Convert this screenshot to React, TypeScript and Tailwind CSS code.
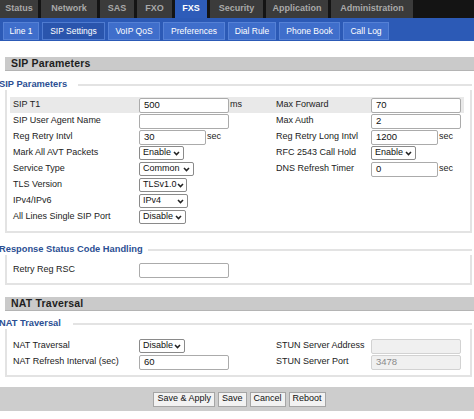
import React from "react";

// FXS > SIP Settings page of a VoIP gateway web admin.

type Cell =
  | { kind: "input"; value?: string; w: string; unit?: string; disabled?: boolean }
  | { kind: "select"; value: string; w: string };

type Row = { label: string; cell: Cell; rlabel?: string; rcell?: Cell; hl?: boolean };

const topTabs = [
  { label: "Status", w: "w-[38px]" },
  { label: "Network", w: "w-[56px]" },
  { label: "SAS", w: "w-[34px]" },
  { label: "FXO", w: "w-[35px]" },
  { label: "FXS", w: "w-[32px]", active: true },
  { label: "Security", w: "w-[53px]" },
  { label: "Application", w: "w-[62px]" },
  { label: "Administration", w: "w-[82px]" },
];

const subTabs = [
  { label: "Line 1", w: "w-[36px]" },
  { label: "SIP Settings", w: "w-[63px]", active: true },
  { label: "VoIP QoS", w: "w-[52px]" },
  { label: "Preferences", w: "w-[62px]" },
  { label: "Dial Rule", w: "w-[48px]" },
  { label: "Phone Book", w: "w-[61px]" },
  { label: "Call Log", w: "w-[46px]" },
];

const sipRows: Row[] = [
  {
    label: "SIP T1",
    cell: { kind: "input", value: "500", w: "w-[90px]", unit: "ms" },
    rlabel: "Max Forward",
    rcell: { kind: "input", value: "70", w: "w-[90px]" },
    hl: true,
  },
  {
    label: "SIP User Agent Name",
    cell: { kind: "input", value: "", w: "w-[90px]" },
    rlabel: "Max Auth",
    rcell: { kind: "input", value: "2", w: "w-[90px]" },
  },
  {
    label: "Reg Retry Intvl",
    cell: { kind: "input", value: "30", w: "w-[67px]", unit: "sec" },
    rlabel: "Reg Retry Long Intvl",
    rcell: { kind: "input", value: "1200", w: "w-[67px]", unit: "sec" },
  },
  {
    label: "Mark All AVT Packets",
    cell: { kind: "select", value: "Enable", w: "w-[45px]" },
    rlabel: "RFC 2543 Call Hold",
    rcell: { kind: "select", value: "Enable", w: "w-[45px]" },
  },
  {
    label: "Service Type",
    cell: { kind: "select", value: "Common", w: "w-[55px]" },
    rlabel: "DNS Refresh Timer",
    rcell: { kind: "input", value: "0", w: "w-[67px]", unit: "sec" },
  },
  { label: "TLS Version", cell: { kind: "select", value: "TLSv1.0", w: "w-[48px]" } },
  { label: "IPv4/IPv6", cell: { kind: "select", value: "IPv4", w: "w-[49px]" } },
  { label: "All Lines Single SIP Port", cell: { kind: "select", value: "Disable", w: "w-[47px]" } },
];

const rscRows: Row[] = [{ label: "Retry Reg RSC", cell: { kind: "input", value: "", w: "w-[90px]" } }];

const natRows: Row[] = [
  {
    label: "NAT Traversal",
    cell: { kind: "select", value: "Disable", w: "w-[46px]" },
    rlabel: "STUN Server Address",
    rcell: { kind: "input", value: "", w: "w-[90px]", disabled: true },
  },
  {
    label: "NAT Refresh Interval (sec)",
    cell: { kind: "input", value: "60", w: "w-[90px]" },
    rlabel: "STUN Server Port",
    rcell: { kind: "input", value: "3478", w: "w-[90px]", disabled: true },
  },
];

function Chevron() {
  return (
    <svg width="7" height="5" viewBox="0 0 7 5" className="shrink-0">
      <polyline points="1,1 3.5,3.6 6,1" fill="none" stroke="#222" strokeWidth="1.5" />
    </svg>
  );
}

function Control({ cell }: { cell: Cell }) {
  if (cell.kind === "select") {
    return (
      <div
        className={`${cell.w} flex h-[14px] items-center justify-between rounded-[2px] border border-[#8a8a8a] bg-white pl-[3px] pr-[3px] text-[9px] text-[#111]`}
      >
        <span>{cell.value}</span>
        <Chevron />
      </div>
    );
  }
  return (
    <div className="flex items-center">
      <div
        className={`${cell.w} flex h-[15px] items-center rounded-[2px] border pl-[4px] text-[9.5px] ${
          cell.disabled ? "border-[#d2d2d2] bg-[#f0f0f0] text-[#8a8a8a]" : "border-[#ababab] bg-white text-[#111]"
        }`}
      >
        {cell.value}
      </div>
      {cell.unit && <span className="ml-[1px] text-[9px] text-[#222]">{cell.unit}</span>}
    </div>
  );
}

function Rows({ rows }: { rows: Row[] }) {
  return (
    <div className="flex flex-col">
      {rows.map((r) => (
        <div
          key={r.label}
          className={`ml-[3px] mr-[6px] grid h-[16px] grid-cols-[129px_137px_95px_1fr] items-center ${
            r.hl ? "bg-[#e9e9e9]" : ""
          }`}
        >
          <span className="pl-[3px] text-[9px] text-[#222]">{r.label}</span>
          <Control cell={r.cell} />
          <span className="text-[9px] text-[#222]">{r.rlabel ?? ""}</span>
          {r.rcell ? <Control cell={r.rcell} /> : <span />}
        </div>
      ))}
    </div>
  );
}

function Group({ legend, lineGap, rows, pt, pb }: { legend: string; lineGap: string; rows: Row[]; pt: string; pb: string }) {
  return (
    <div className="ml-[5px] mr-[2px] flex flex-col">
      <div className="flex h-[10px] items-center">
        <span className={`-ml-[6px] shrink-0 text-[9.3px] font-bold text-[#2b4f93] ${lineGap}`}>{legend}</span>
        <div className="h-[2px] flex-1 bg-[#e3e3e3]" />
      </div>
      <div className={`border-x-2 border-b-2 border-[#e3e3e3] ${pt} ${pb}`}>
        <Rows rows={rows} />
      </div>
    </div>
  );
}

function SectionBar({ title }: { title: string }) {
  return (
    <div className="ml-[5px] flex h-[14px] items-center border-b border-[#b4b4b4] bg-[#cacaca] pl-[6px] text-[10.5px] font-bold tracking-[0.2px] text-[#1e1e1e]">
      {title}
    </div>
  );
}

export default function App() {
  return (
    <div className="flex h-[419px] w-[474px] flex-col overflow-hidden bg-white font-['Liberation_Sans',Arial,sans-serif]">
      <div className="flex h-[18px] gap-[3px] bg-[#141414]">
        {topTabs.map((t) => (
          <div
            key={t.label}
            className={`${t.w} flex h-full items-center justify-center text-[9px] font-bold ${
              t.active ? "bg-[#2e5cb9] text-white" : "bg-[#3b3b3b] text-[#a9a9a9]"
            }`}
          >
            {t.label}
          </div>
        ))}
      </div>
      <div className="flex h-[23px] gap-[3px] bg-[#2c5ab6] pl-[3px] pt-[4px]">
        {subTabs.map((t) => (
          <div
            key={t.label}
            className={`${t.w} flex h-[18px] items-center justify-center border text-[8.5px] text-white ${
              t.active ? "border-[#4f7bd0] bg-[#2a55ad]" : "border-[#5581d6] bg-[#3f6ecb]"
            }`}
          >
            {t.label}
          </div>
        ))}
      </div>

      <div className="mt-[16px]">
        <SectionBar title="SIP Parameters" />
      </div>
      <div className="mt-[9px]">
        <Group legend="SIP Parameters" lineGap="pr-[11px]" rows={sipRows} pt="pt-[7px]" pb="pb-[6px]" />
      </div>
      <div className="mt-[12px]">
        <Group legend="Response Status Code Handling" lineGap="pr-[5px]" rows={rscRows} pt="pt-[7px]" pb="pb-[5px]" />
      </div>
      <div className="mt-[12px]">
        <SectionBar title="NAT Traversal" />
      </div>
      <div className="mt-[8px]">
        <Group legend="NAT Traversal" lineGap="pr-[12px]" rows={natRows} pt="pt-[9px]" pb="pb-[5px]" />
      </div>

      <div className="mt-[10px] flex h-[24px] items-center justify-center gap-[3px] bg-[#cdcdcd] pl-[5px]">
        {["Save & Apply", "Save", "Cancel", "Reboot"].map((b) => (
          <button
            key={b}
            type="button"
            className="flex h-[15px] items-center border border-[#a5a5a5] bg-[#f2f2f2] px-[3px] text-[9px] text-[#111]"
          >
            {b}
          </button>
        ))}
      </div>
    </div>
  );
}
